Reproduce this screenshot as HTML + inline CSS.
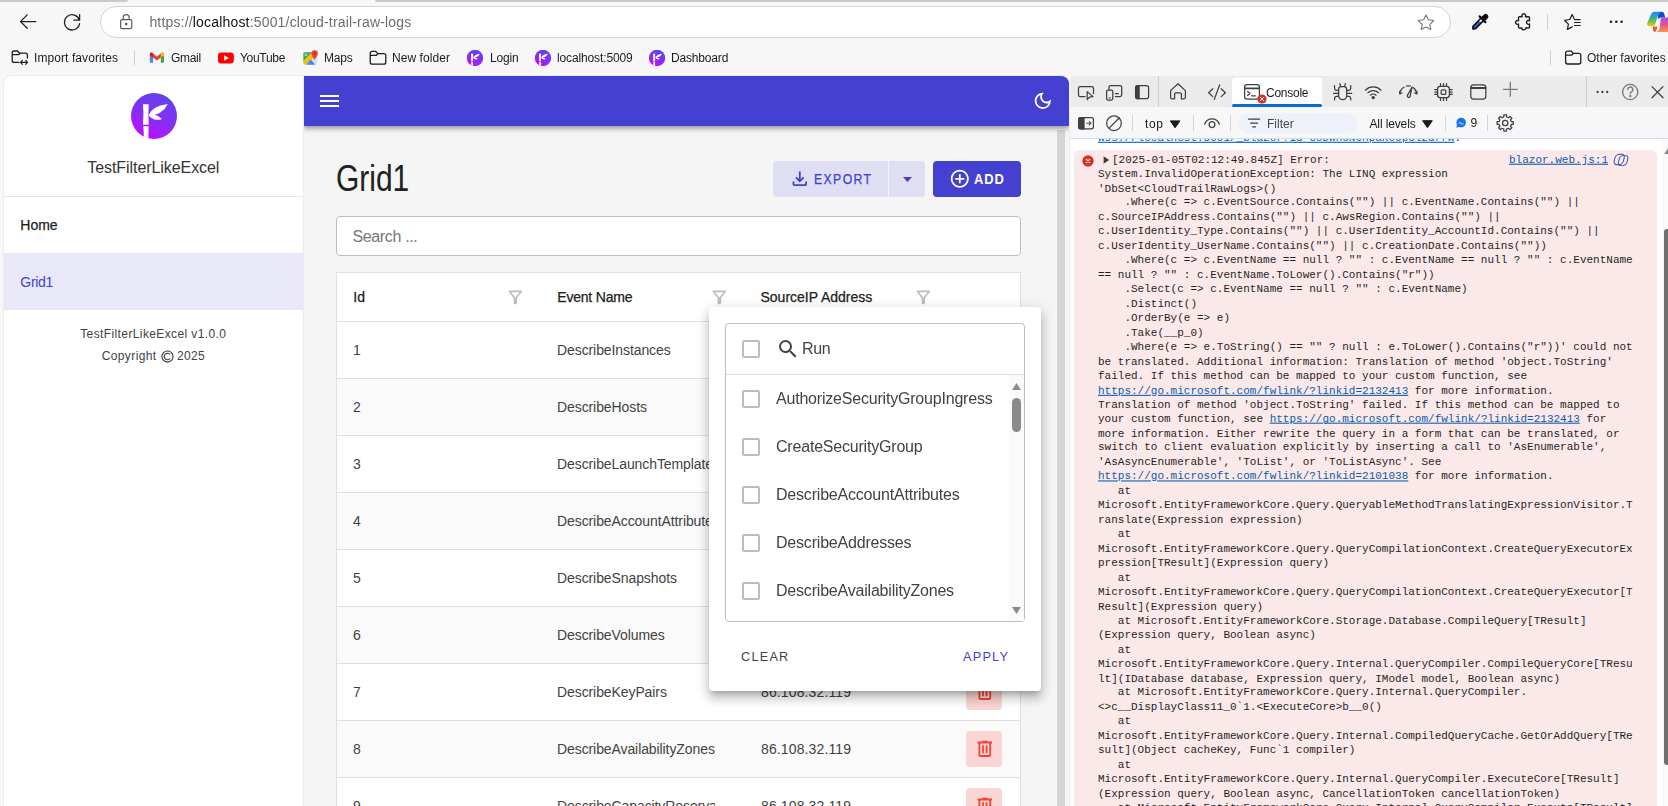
<!DOCTYPE html>
<html>
<head>
<meta charset="utf-8">
<title>Grid1</title>
<style>
*{box-sizing:border-box;margin:0;padding:0}
html,body{width:1668px;height:806px;overflow:hidden;background:#f7f7f7;font-family:"Liberation Sans",sans-serif;}
.abs{position:absolute}
#root{position:absolute;left:0;top:0;width:1668px;height:806px;overflow:hidden;background:#f7f7f7}
.t{position:absolute;white-space:nowrap;line-height:1}
.li,.bm,.gs{will-change:transform}
svg{position:absolute;overflow:visible}
/* ---------- browser chrome ---------- */
#tabstripL{left:0;top:0;width:127.500px;height:1.500px;background:#c9c9c9;border-radius:0 0 3px 0}
#tabstripR{left:375px;top:0;width:1293px;height:1.500px;background:#c9c9c9;border-radius:0 0 0 3px}
#addr{left:100px;top:6px;width:1351px;height:31.500px;background:#fff;border:1px solid #d4d4d4;border-radius:16px}
.bm{font-size:12px;color:#1b1b1b;top:51.600px;z-index:6}
.url{font-size:14px;letter-spacing:0.175px;z-index:6}
/* ---------- app ---------- */
#page{left:4px;top:76px;width:1065px;height:730px;background:#f5f5f5;border-radius:8px 8px 0 0;overflow:hidden;box-shadow:0 0 1.500px rgba(0,0,0,.22)}
#side{left:0;top:0;width:299px;height:730px;background:#fff}
#sideBorder{left:299px;top:0;width:1px;height:730px;background:#ececec}
#hdr2{left:0;top:0;width:765px;height:50px;background:#4340d2;box-shadow:0 2px 4px rgba(0,0,0,.28),0 4px 5px rgba(0,0,0,.12)}

#pg{left:-4px;top:-76px;width:1668px;height:806px}
.rb{font-family:"Liberation Sans",sans-serif}
.med{-webkit-text-stroke:0.25px currentColor}
#sideDiv{left:4px;top:196px;width:299px;height:1px;background:#e8e8e8}
#navsel{left:4px;top:253.400px;width:299px;height:57.100px;background:#e8e8f9}
#h1{left:336px;top:160.500px;font-size:36px;color:#212121;transform-origin:0 0;transform:scaleX(0.832)}
.btn{border-radius:4px;height:36px;top:161px}
#search{left:336px;top:216px;width:685px;height:40px;background:#fff;border:1px solid #bdbdbd;border-radius:4px}
#tbl{left:336px;top:272px;width:685px;height:540px;background:#fff;border:1px solid #e0e0e0}
.row{left:337px;width:683px;height:57px;border-top:1px solid #e0e0e0}
.row.alt{background:#fafafa}
.th{font-size:14px;color:#212121;top:290px}
.td{font-size:14px;color:#424242;letter-spacing:-0.09px}
.del{left:966px;width:36px;height:36px;border-radius:4px;background:#f9d6d3}
#pop{left:709px;top:307px;width:332px;height:384px;background:#fff;border-radius:4px;box-shadow:0 5px 5px -3px rgba(0,0,0,.2),0 8px 10px 1px rgba(0,0,0,.14),0 3px 14px 2px rgba(0,0,0,.12)}
#lb{left:725px;top:323px;width:300px;height:299px;border:1px solid #bdbdbd;border-radius:4px;background:#fff;overflow:hidden}
.cb{left:742px;width:18px;height:18px;border:2px solid #bdbdbd;border-radius:2px;background:#fff}
.li{left:776px;font-size:16px;color:#424242;letter-spacing:-0.2px}
#vscroll{left:1057px;top:130px;width:8px;height:680px;background:#d5d5d5}
/* ---------- devtools ---------- */
#dt{left:1071px;top:76px;width:597px;height:730px;background:#fff;overflow:hidden}
#dtbar1{left:0;top:0;width:597px;height:31px;background:#ebebeb}
#dtbar2{left:0;top:31px;width:597px;height:32px;background:#f7f7f7;border-bottom:1px solid #cbdcf7;z-index:3}
#dtbar1{z-index:3}
#err{left:3px;top:74px;width:583px;height:700px;background:#fbe9e9;border-radius:6px 6px 0 0}
#con{left:27px;top:77.300px;transform:scaleY(1.07);transform-origin:0 0;font-family:"Liberation Mono",monospace;font-size:11px;line-height:13.463px;color:#1f1f1f;white-space:pre;z-index:2}
#con .l1{padding-left:14px}
.dtt{font-size:12px;color:#1b1b1b;z-index:6}
.lk{color:#0a5cae;text-decoration:underline;text-underline-offset:1.200px}
#prevmsg{left:27px;top:54.300px;transform:scaleY(1.07);transform-origin:0 0;font-family:"Liberation Mono",monospace;font-size:11px;line-height:14.386px;color:#1f1f1f;white-space:pre;z-index:1}
#srclink{left:438px;top:77.300px;transform:scaleY(1.07);transform-origin:0 0;font-family:"Liberation Mono",monospace;font-size:11px;line-height:13.463px;white-space:pre;z-index:2}
#dtscroll{left:593px;top:153px;width:4px;height:536px;background:#707070;border-radius:3px 0 0 3px;z-index:2}
#dtscrollbg{left:590.500px;top:63px;width:8px;height:667px;background:#fafafa;z-index:1}
</style>
</head>
<body>
<div id="root">
<!-- CHROME -->
<div class="abs" id="tabstripL"></div>
<div class="abs" id="tabstripR"></div>
<div class="abs" id="addr"></div>
<svg id="chsvg" style="left:0;top:0;z-index:5" width="1668" height="76" viewBox="0 0 1668 76">
  <defs>
    <linearGradient id="lg" x1="0.7" y1="0" x2="0.25" y2="1"><stop offset="0" stop-color="#5d45ec"/><stop offset="0.55" stop-color="#8a2cf6"/><stop offset="1" stop-color="#c80aff"/></linearGradient>
    <clipPath id="lc"><circle cx="30" cy="29.85" r="23"/></clipPath>
    <symbol id="logo" viewBox="7 6.85 46 46">
      <circle cx="30" cy="29.85" r="23" fill="url(#lg)"/>
      <g clip-path="url(#lc)" fill="#fff">
        <path d="M19 18.1 H24.7 Q24.1 28 24.7 38.5 H19 Q19.9 28 19 18.1Z"/>
        <path d="M19.2 40.2 H24.7 Q24.3 47 24.5 54 H19.9 Q20 47 19.2 40.2Z"/>
        <path d="M24.800 29.700 Q27.300 20.200 43.900 17.900 Q38.200 29 24.800 29.700Z"/>
        <path d="M24.800 29.300 Q31.500 26.700 38 32.800 Q30.500 35.700 24.800 29.300Z"/>
      </g>
    </symbol>
    <linearGradient id="cp1" x1="0" y1="0" x2="0" y2="1"><stop offset="0" stop-color="#1c8ef2"/><stop offset="0.4" stop-color="#2aa9b8"/><stop offset="0.6" stop-color="#5dbb55"/><stop offset="1" stop-color="#eccb00"/></linearGradient>
    <linearGradient id="cp2" x1="0" y1="0" x2="0" y2="1"><stop offset="0" stop-color="#a24fe6"/><stop offset="0.5" stop-color="#e8508e"/><stop offset="1" stop-color="#ff9540"/></linearGradient>
    <linearGradient id="cp3" x1="0" y1="0" x2="0" y2="1"><stop offset="0" stop-color="#3bc7b0"/><stop offset="0.5" stop-color="#c7d144"/><stop offset="1" stop-color="#f3a438"/></linearGradient>
  </defs>
  <g fill="none" stroke="#1f1f1f" stroke-width="1.3" stroke-linecap="round" stroke-linejoin="round">
    <!-- back -->
    <path d="M20.6 21.6 H35.8 M27.2 14.9 L20.5 21.6 L27.2 28.3"/>
    <!-- reload -->
    <path d="M79.4 20.2 A7.6 7.6 0 1 0 79.6 23.6 M79.6 14.6 V20.2 H74"/>
    <!-- import favorites icon -->
    <path d="M19 62.4 H14.2 a2 2 0 0 1 -2 -2 V53 a2 2 0 0 1 2 -2 h3.4 l2 2.2 H25.4 a2 2 0 0 1 2 2 V58 M12.2 54.6 h6.6 l1.8 -1.4"/>
    <path d="M20.4 62.4 H27.6 M22.4 60.4 l-2 2 l2 2 M25.6 60.4 l2 2 l-2 2" stroke-width="1.1"/>
    <!-- new folder icon -->
    <path d="M370.2 62.2 V53.4 a2 2 0 0 1 2 -2 h3.6 l2 2.2 H383.8 a2 2 0 0 1 2 2 V62.2 a2 2 0 0 1 -2 2 H372.2 a2 2 0 0 1 -2 -2 Z M370.2 55.4 h6 l1.8 -1.6"/>
    <!-- other favorites folder -->
    <path d="M1565.6 62 V53.2 a2 2 0 0 1 2 -2 h3.6 l2 2.2 H1578.8 a2 2 0 0 1 2 2 V62 a2 2 0 0 1 -2 2 H1567.6 a2 2 0 0 1 -2 -2 Z M1565.6 55.2 h6 l1.8 -1.6"/>
    <!-- puzzle -->
    <path d="M1519.500 16.800 H1522.200 a1.900 1.900 0 1 1 3.200 0 H1528.500 a1 1 0 0 1 1 1 V20.800 a1.900 1.900 0 1 0 0 3.200 V27 a1 1 0 0 1 -1 1 H1525.700 a1.900 1.900 0 0 1 -3.800 0 H1519.500 a1 1 0 0 1 -1 -1 V24 a1.900 1.900 0 1 1 0 -3.200 V17.800 a1 1 0 0 1 1 -1 Z" stroke-width="1.400"/>
    <!-- favorites star + lines -->
    <path d="M1574 18.600 L1572.100 14.600 L1569.800 19.500 L1564.500 20.300 L1568.400 24.100 L1567.400 29.400 L1572.200 26.900" stroke-width="1.250"/>
    <path d="M1574.500 19.600 H1580.200 M1574.500 22.500 H1580.200 M1574.500 25.500 H1580.200" stroke-width="1.200"/>
  </g>
  <!-- lock -->
  <g fill="none" stroke="#5a5a5a" stroke-width="1.2" stroke-linejoin="round">
    <rect x="120.6" y="19.6" width="11.2" height="9" rx="1.6"/>
    <path d="M123.2 19.6 V17.6 a3 3 0 0 1 6 0 V19.6"/>
    <circle cx="126.2" cy="24.1" r="0.7" fill="#5a5a5a"/>
  </g>
  <!-- star -->
  <path d="M1426 14.9 L1428.4 19.8 L1433.8 20.5 L1429.8 24.3 L1430.8 29.6 L1426 27 L1421.2 29.6 L1422.2 24.3 L1418.2 20.5 L1423.6 19.8 Z" fill="none" stroke="#7a7a7a" stroke-width="1.15" stroke-linejoin="round"/>
  <!-- separators -->
  <path d="M134.5 50.6 V65.6 M1547.5 14 V29.8 M1550.5 50 V65.6" stroke="#d0d0d0" stroke-width="1"/>
  <!-- eyedropper -->
  <g>
    <path d="M1472.900 28.900 L1473 26.200 L1481.400 17.800 L1483.900 20.300 L1475.500 28.700 Z" fill="#3a55d8" stroke="#0a0a0a" stroke-width="1.600" stroke-linejoin="round"/>
    <path d="M1478.800 21.600 L1481.400 19 L1482.700 20.300 L1481.200 21.800 Z" fill="#fff"/>
    <path d="M1479.600 16.400 L1485.400 22.200" stroke="#0a0a0a" stroke-width="2.200" stroke-linecap="round"/>
    <path d="M1481.800 17.400 L1484.400 14.800 a1.500 1.500 0 0 1 2.100 0 l0.900 0.900 a1.500 1.500 0 0 1 0 2.100 L1484.800 20.400 Z" fill="#0a0a0a" stroke="#0a0a0a" stroke-width="1.200" stroke-linejoin="round"/>
  </g>
  <!-- ... -->
  <g fill="#1f1f1f"><circle cx="1611" cy="21.8" r="1.3"/><circle cx="1616.3" cy="21.8" r="1.3"/><circle cx="1621.6" cy="21.8" r="1.3"/></g>
  <!-- copilot -->
  <g>
    <path d="M1657.600 15.600 Q1658.800 11.700 1661.600 11.700 Q1663.700 11.700 1664.300 14 L1665.200 17.600 H1661 Q1659 17.600 1658.400 19.200 Z" fill="#1747d4"/>
    <path d="M1651.400 13.600 Q1652.500 11.700 1654.600 11.700 H1661.600 Q1658.800 12.400 1657.700 16 L1655.300 24 Q1654.600 26.200 1652.600 26.200 H1649.200 Q1646.600 25.800 1647.200 23 Z" fill="url(#cp1)"/>
    <path d="M1661 17.600 H1668 V31.900 H1656.400 Q1658.800 31.500 1659.600 28.800 Z" fill="url(#cp2)"/>
    <path d="M1652.900 26.600 H1657.500 L1656.300 30.400 Q1655.700 31.900 1654.500 31.900 Q1653.200 31.400 1653 29.600 Z" fill="#ee5a30"/>
  </g>
  <!-- gmail -->
  <g>
    <path d="M149.8 55.2 V61.8 a1 1 0 0 0 1 1 H153 V56.6 Z" fill="#4285f4"/>
    <path d="M164 55.2 V61.8 a1 1 0 0 1 -1 1 H160.800 V56.6 Z" fill="#34a853"/>
    <path d="M149.800 55.2 V54.200 a1.600 1.600 0 0 1 2.600 -1.300 L156.900 56.400 L161.400 52.900 a1.600 1.600 0 0 1 2.600 1.300 V55.2 L156.900 60.600 Z" fill="#ea4335"/>
    <path d="M160.8 53.400 L161.400 52.900 a1.600 1.600 0 0 1 2.600 1.300 V55.200 L160.800 57.600 Z" fill="#fbbc04"/>
    <path d="M153 53.400 L152.400 52.900 a1.600 1.600 0 0 0 -2.600 1.300 V55.200 L153 57.600 Z" fill="#c5221f"/>
  </g>
  <!-- youtube -->
  <rect x="218" y="52.500" width="15.800" height="10.900" rx="3" fill="#ff0000"/>
  <path d="M224.100 55.200 V60.700 L228.800 57.950 Z" fill="#fff"/>
  <!-- maps -->
  <g>
    <path d="M303.400 53.600 a1.400 1.400 0 0 1 1.400 -1.400 H312 L303.400 61.500 Z" fill="#34a853"/>
    <path d="M312 52.200 h1.500 L316 57 L305 64.800 h-0.200 a1.400 1.400 0 0 1 -1.400 -1.400 V61.500 Z" fill="#fbbc04"/>
    <path d="M306 64.800 L310.800 59.600 L315.600 64.800 Z" fill="#4285f4"/>
    <path d="M311.500 59 L316.600 55 V63.400 a1.400 1.400 0 0 1 -1.200 1.400 Z" fill="#dadce0"/>
    <circle cx="305.900" cy="54.800" r="1.100" fill="none" stroke="#fff" stroke-width="0.600"/>
    <path d="M314.600 50.300 a3.300 3.300 0 0 1 3.300 3.300 q0 2 -3.300 6.200 q-3.300 -4.200 -3.300 -6.200 a3.300 3.300 0 0 1 3.300 -3.300 Z" fill="#ea4335"/>
    <circle cx="314.600" cy="53.500" r="1.100" fill="#a52714"/>
  </g>
  <use href="#logo" x="466.700" y="49.750" width="16.500" height="16.500"/>
  <use href="#logo" x="534.700" y="49.750" width="16.500" height="16.500"/>
  <use href="#logo" x="648.800" y="49.750" width="16.500" height="16.500"/>
</svg>
<div class="t url" style="left:149.400px;top:15.100px"><span style="color:#6d6d6d">https://</span><span style="color:#111">localhost</span><span style="color:#6d6d6d">:5001/cloud-trail-raw-logs</span></div>
<div class="t bm" style="left:34px;letter-spacing:0.08px">Import favorites</div>
<div class="t bm" style="left:171px;letter-spacing:-0.3px">Gmail</div>
<div class="t bm" style="left:240.400px;letter-spacing:-0.3px">YouTube</div>
<div class="t bm" style="left:324.200px;letter-spacing:-0.18px">Maps</div>
<div class="t bm" style="left:392.400px;letter-spacing:0.06px">New folder</div>
<div class="t bm" style="left:489.500px;letter-spacing:-0.15px">Login</div>
<div class="t bm" style="left:557px;letter-spacing:-0.13px">localhost:5009</div>
<div class="t bm" style="left:671.200px;letter-spacing:-0.17px">Dashboard</div>
<div class="t bm" style="left:1587.200px">Other favorites</div>
<!-- BOOKMARKS -->

<!-- APP -->
<div class="abs" id="page">
  <div class="abs" id="side"></div>
  <div class="abs" id="sideBorder"></div>
  <div class="abs" id="pg">
  <!-- sidebar -->
  <svg style="left:131px;top:93px" width="46" height="46" viewBox="0 0 46 46"><use href="#logo" x="0" y="0" width="46" height="46"/></svg>
  <div class="t" style="left:87.300px;top:159.500px;font-size:16px;color:#333;letter-spacing:-0.07px">TestFilterLikeExcel</div>
  <div class="abs" id="sideDiv"></div>
  <div class="t med" style="left:20.300px;top:218px;font-size:14px;color:#212121">Home</div>
  <div class="abs" id="navsel"></div>
  <div class="t" style="left:20.300px;top:275px;font-size:14px;color:#4340d2;letter-spacing:-0.29px">Grid1</div>
  <div class="t" style="left:80.200px;top:328px;font-size:12px;color:#424242;letter-spacing:0.39px">TestFilterLikeExcel v1.0.0</div>
  <div class="t" style="left:101.700px;top:350px;font-size:12px;color:#424242;letter-spacing:0.39px">Copyright</div>
  <svg style="left:161px;top:349.500px" width="13" height="13" viewBox="0 0 13 13"><circle cx="6.500" cy="6.500" r="5.600" fill="none" stroke="#333" stroke-width="1.050"/><path d="M9.100 4.500 A3.300 3.300 0 1 0 9.100 8.500" fill="none" stroke="#333" stroke-width="1.100"/></svg>
  <div class="t" style="left:176.900px;top:350px;font-size:12px;color:#424242;letter-spacing:0.39px">2025</div>
  <!-- title + buttons -->
  <div class="t" id="h1">Grid1</div>
  <div class="abs btn" style="left:773px;width:115px;background:#dfdff3;border-radius:4px 0 0 4px"></div>
  <div class="abs btn" style="left:889px;width:36px;background:#dfdff3;border-radius:0 4px 4px 0"></div>
  <svg style="left:788.700px;top:167.900px" width="21.600" height="21.600" viewBox="0 0 24 24"><path fill="#4340d2" d="M18 15v3H6v-3H4v3c0 1.100.9 2 2 2h12c1.100 0 2-.9 2-2v-3h-2zm-1-4l-1.410-1.410L13 12.170V4h-2v8.170L8.410 9.590 7 11l5 5 5-5z"/></svg>
  <div class="t med" style="left:814px;top:171.700px;font-size:14.600px;color:#4340d2;letter-spacing:1.64px;transform-origin:0 50%;transform:scaleX(0.84)">EXPORT</div>
  <svg style="left:903px;top:177px" width="9" height="5" viewBox="0 0 9 5"><path d="M0 0 H9 L4.500 5 Z" fill="#4340d2"/></svg>
  <div class="abs btn" style="left:933px;width:88px;background:#4340d2"></div>
  <svg style="left:948.600px;top:168.200px" width="21.600" height="21.600" viewBox="0 0 24 24"><path fill="#fff" d="M13 7h-2v4H7v2h4v4h2v-4h4v-2h-4V7zm-1-5C6.480 2 2 6.480 2 12s4.480 10 10 10 10-4.480 10-10S17.520 2 12 2zm0 18c-4.410 0-8-3.590-8-8s3.590-8 8-8 8 3.590 8 8-3.590 8-8 8z"/></svg>
  <div class="t" style="left:973.500px;top:171.700px;font-size:14.600px;font-weight:700;color:#fff;letter-spacing:1px;transform-origin:0 50%;transform:scaleX(0.884)">ADD</div>
  <!-- search -->
  <div class="abs" id="search"></div>
  <div class="t" style="left:352.400px;top:229px;font-size:16px;color:#757575;letter-spacing:-0.34px">Search ...</div>
  <!-- table -->
  <div class="abs" id="tbl"></div>
  <div class="t th med" style="left:353.300px">Id</div>
  <svg style="left:504.6px;top:286.600px" width="20.600" height="20.600" viewBox="0 0 24 24"><path fill="#bdbdbd" d="M7 6h10l-5.010 6.300L7 6zm-2.750-.39C6.270 8.200 10 13 10 13v6c0 .55.45 1 1 1h2c.55 0 1-.45 1-1v-6s3.720-4.800 5.740-7.390A.998.998 0 0 0 18.950 4H5.040c-.83 0-1.300.95-.79 1.610z"/></svg>
  <div class="t th med" style="left:557.300px;letter-spacing:-0.21px">Event Name</div>
  <svg style="left:708.6px;top:286.600px" width="20.600" height="20.600" viewBox="0 0 24 24"><path fill="#bdbdbd" d="M7 6h10l-5.010 6.300L7 6zm-2.750-.39C6.270 8.200 10 13 10 13v6c0 .55.45 1 1 1h2c.55 0 1-.45 1-1v-6s3.720-4.800 5.740-7.390A.998.998 0 0 0 18.950 4H5.040c-.83 0-1.300.95-.79 1.610z"/></svg>
  <div class="t th med" style="left:760.500px">SourceIP Address</div>
  <svg style="left:912.6px;top:286.600px" width="20.600" height="20.600" viewBox="0 0 24 24"><path fill="#bdbdbd" d="M7 6h10l-5.010 6.300L7 6zm-2.750-.39C6.270 8.200 10 13 10 13v6c0 .55.45 1 1 1h2c.55 0 1-.45 1-1v-6s3.720-4.800 5.740-7.390A.998.998 0 0 0 18.950 4H5.040c-.83 0-1.300.95-.79 1.610z"/></svg>
  <div class="abs row" style="top:321px"></div>
  <div class="t td" style="left:353px;top:343.3px">1</div>
  <div class="t td" style="left:557px;top:343.3px">DescribeInstances</div>
  <div class="t td" style="left:761px;top:343.3px;letter-spacing:0.13px">86.108.32.119</div>
  <div class="abs del" style="top:332px"></div>
  <svg style="left:973.500px;top:339.2px" width="21.600" height="21.600" viewBox="0 0 24 24"><path fill="#f44336" d="M7 21q-.825 0-1.412-.587T5 19V6H4V4h5V3h6v1h5v2h-1v13q0 .825-.587 1.413T17 21zM17 6H7v13h10zM9 17h2V8H9zm4 0h2V8h-2z"/></svg>
  <div class="abs row alt" style="top:378px"></div>
  <div class="t td" style="left:353px;top:400.3px">2</div>
  <div class="t td" style="left:557px;top:400.3px">DescribeHosts</div>
  <div class="t td" style="left:761px;top:400.3px;letter-spacing:0.13px">86.108.32.119</div>
  <div class="abs del" style="top:389px"></div>
  <svg style="left:973.500px;top:396.2px" width="21.600" height="21.600" viewBox="0 0 24 24"><path fill="#f44336" d="M7 21q-.825 0-1.412-.587T5 19V6H4V4h5V3h6v1h5v2h-1v13q0 .825-.587 1.413T17 21zM17 6H7v13h10zM9 17h2V8H9zm4 0h2V8h-2z"/></svg>
  <div class="abs row" style="top:435px"></div>
  <div class="t td" style="left:353px;top:457.3px">3</div>
  <div class="t td" style="left:557px;top:457.3px">DescribeLaunchTemplates</div>
  <div class="t td" style="left:761px;top:457.3px;letter-spacing:0.13px">86.108.32.119</div>
  <div class="abs del" style="top:446px"></div>
  <svg style="left:973.500px;top:453.2px" width="21.600" height="21.600" viewBox="0 0 24 24"><path fill="#f44336" d="M7 21q-.825 0-1.412-.587T5 19V6H4V4h5V3h6v1h5v2h-1v13q0 .825-.587 1.413T17 21zM17 6H7v13h10zM9 17h2V8H9zm4 0h2V8h-2z"/></svg>
  <div class="abs row alt" style="top:492px"></div>
  <div class="t td" style="left:353px;top:514.3px">4</div>
  <div class="t td" style="left:557px;top:514.3px">DescribeAccountAttributes</div>
  <div class="t td" style="left:761px;top:514.3px;letter-spacing:0.13px">86.108.32.119</div>
  <div class="abs del" style="top:503px"></div>
  <svg style="left:973.500px;top:510.2px" width="21.600" height="21.600" viewBox="0 0 24 24"><path fill="#f44336" d="M7 21q-.825 0-1.412-.587T5 19V6H4V4h5V3h6v1h5v2h-1v13q0 .825-.587 1.413T17 21zM17 6H7v13h10zM9 17h2V8H9zm4 0h2V8h-2z"/></svg>
  <div class="abs row" style="top:549px"></div>
  <div class="t td" style="left:353px;top:571.3px">5</div>
  <div class="t td" style="left:557px;top:571.3px">DescribeSnapshots</div>
  <div class="t td" style="left:761px;top:571.3px;letter-spacing:0.13px">86.108.32.119</div>
  <div class="abs del" style="top:560px"></div>
  <svg style="left:973.500px;top:567.2px" width="21.600" height="21.600" viewBox="0 0 24 24"><path fill="#f44336" d="M7 21q-.825 0-1.412-.587T5 19V6H4V4h5V3h6v1h5v2h-1v13q0 .825-.587 1.413T17 21zM17 6H7v13h10zM9 17h2V8H9zm4 0h2V8h-2z"/></svg>
  <div class="abs row alt" style="top:606px"></div>
  <div class="t td" style="left:353px;top:628.3px">6</div>
  <div class="t td" style="left:557px;top:628.3px">DescribeVolumes</div>
  <div class="t td" style="left:761px;top:628.3px;letter-spacing:0.13px">86.108.32.119</div>
  <div class="abs del" style="top:617px"></div>
  <svg style="left:973.500px;top:624.2px" width="21.600" height="21.600" viewBox="0 0 24 24"><path fill="#f44336" d="M7 21q-.825 0-1.412-.587T5 19V6H4V4h5V3h6v1h5v2h-1v13q0 .825-.587 1.413T17 21zM17 6H7v13h10zM9 17h2V8H9zm4 0h2V8h-2z"/></svg>
  <div class="abs row" style="top:663px"></div>
  <div class="t td" style="left:353px;top:685.3px">7</div>
  <div class="t td" style="left:557px;top:685.3px">DescribeKeyPairs</div>
  <div class="t td" style="left:761px;top:685.3px;letter-spacing:0.13px">86.108.32.119</div>
  <div class="abs del" style="top:674px"></div>
  <svg style="left:973.500px;top:681.2px" width="21.600" height="21.600" viewBox="0 0 24 24"><path fill="#f44336" d="M7 21q-.825 0-1.412-.587T5 19V6H4V4h5V3h6v1h5v2h-1v13q0 .825-.587 1.413T17 21zM17 6H7v13h10zM9 17h2V8H9zm4 0h2V8h-2z"/></svg>
  <div class="abs row alt" style="top:720px"></div>
  <div class="t td" style="left:353px;top:742.3px">8</div>
  <div class="t td" style="left:557px;top:742.3px">DescribeAvailabilityZones</div>
  <div class="t td" style="left:761px;top:742.3px;letter-spacing:0.13px">86.108.32.119</div>
  <div class="abs del" style="top:731px"></div>
  <svg style="left:973.500px;top:738.2px" width="21.600" height="21.600" viewBox="0 0 24 24"><path fill="#f44336" d="M7 21q-.825 0-1.412-.587T5 19V6H4V4h5V3h6v1h5v2h-1v13q0 .825-.587 1.413T17 21zM17 6H7v13h10zM9 17h2V8H9zm4 0h2V8h-2z"/></svg>
  <div class="abs row" style="top:777px"></div>
  <div class="t td" style="left:353px;top:799.3px">9</div>
  <div class="t td" style="left:557px;top:799.3px;width:157.500px;overflow:hidden">DescribeCapacityReservations</div>
  <div class="t td" style="left:761px;top:799.3px;letter-spacing:0.13px">86.108.32.119</div>
  <div class="abs del" style="top:788px"></div>
  <svg style="left:973.500px;top:795.2px" width="21.600" height="21.600" viewBox="0 0 24 24"><path fill="#f44336" d="M7 21q-.825 0-1.412-.587T5 19V6H4V4h5V3h6v1h5v2h-1v13q0 .825-.587 1.413T17 21zM17 6H7v13h10zM9 17h2V8H9zm4 0h2V8h-2z"/></svg>
  <!-- page scrollbar -->
  <div class="abs" id="vscroll"></div>
  <!-- header -->
  <div class="abs" style="left:304px;top:76px;width:765px;height:70px;overflow:hidden"><div class="abs" id="hdr2"></div></div>
  <svg style="left:319.700px;top:95px" width="20" height="12" viewBox="0 0 20 12"><path d="M0 1 H19 M0 6 H19 M0 11 H19" stroke="#fff" stroke-width="2"/></svg>
  <svg style="left:1032.300px;top:90.300px" width="21.600" height="21.600" viewBox="0 0 24 24"><path fill="#fff" d="M9.37 5.51A7.350 7.350 0 0 0 9.100 7.500c0 4.080 3.320 7.400 7.400 7.400.68 0 1.350-.09 1.990-.27A7.014 7.014 0 0 1 12 19c-3.860 0-7-3.140-7-7 0-2.930 1.810-5.450 4.370-6.490zM12 3a9 9 0 1 0 9 9c0-.46-.04-.92-.1-1.360a5.389 5.389 0 0 1-4.400 2.260 5.403 5.403 0 0 1-3.140-9.800c-.44-.06-.9-.1-1.360-.1z"/></svg>
  <!-- popup -->
  <div class="abs" id="pop"></div>
  <div class="abs" id="lb"></div>
  <div class="abs" style="left:726px;top:374px;width:298px;height:1px;background:#e0e0e0"></div>
  <div class="abs" style="left:1009px;top:375px;width:15px;height:246px;background:#fafafa"></div>
  <div class="abs cb" style="top:340px"></div>
  <svg style="left:775.600px;top:337.200px" width="24" height="24" viewBox="0 0 24 24"><path fill="#424242" d="M15.500 14h-.79l-.28-.27A6.471 6.471 0 0 0 16 9.500 6.500 6.500 0 1 0 9.500 16c1.610 0 3.090-.59 4.230-1.570l.27.28v.79l5 4.990L20.490 19l-4.990-5zm-6 0C7.010 14 5 11.990 5 9.500S7.010 5 9.500 5 14 7.010 14 9.500 11.990 14 9.500 14z"/></svg>
  <div class="t gs" style="left:802px;top:340.500px;font-size:16px;color:#424242;letter-spacing:-0.35px">Run</div>
  <div class="abs cb" style="top:389.7px"></div>
  <div class="t li" style="top:391.3px">AuthorizeSecurityGroupIngress</div>
  <div class="abs cb" style="top:437.7px"></div>
  <div class="t li" style="top:439.3px">CreateSecurityGroup</div>
  <div class="abs cb" style="top:485.7px"></div>
  <div class="t li" style="top:487.3px">DescribeAccountAttributes</div>
  <div class="abs cb" style="top:533.7px"></div>
  <div class="t li" style="top:535.3px">DescribeAddresses</div>
  <div class="abs cb" style="top:581.7px"></div>
  <div class="t li" style="top:583.3px">DescribeAvailabilityZones</div>
  <svg style="left:1012px;top:383px" width="9" height="7" viewBox="0 0 9 7"><path d="M0 7 L4.500 0 L9 7 Z" fill="#8a8a8a"/></svg>
  <div class="abs" style="left:1012px;top:398px;width:9px;height:34px;border-radius:4.500px;background:#8a8a8a"></div>
  <svg style="left:1012px;top:607px" width="9" height="7" viewBox="0 0 9 7"><path d="M0 0 L4.500 7 L9 0 Z" fill="#8a8a8a"/></svg>
  <div class="t" style="left:741px;top:650.200px;font-size:13.650px;color:#424242;letter-spacing:1.34px;transform-origin:0 50%;transform:scaleX(0.93)">CLEAR</div>
  <div class="t" style="left:962.800px;top:650.200px;font-size:13.650px;color:#4340d2;letter-spacing:1.34px;transform-origin:0 50%;transform:scaleX(0.93)">APPLY</div>
</div>
</div>

<!-- DEVTOOLS -->
<div class="abs" id="dt">
  <div class="abs" id="dtbar1"></div>
  <div class="abs" id="dtbar2"></div>
  <!-- DT-ICONS -->
  <!-- CONSOLE -->
  <div class="abs" id="prevmsg"><u class="lk">wss://localhost:5001/_blazor?id=GoDWnoNchpaRcOp5l2arrw</u>.</div>
    <div class="abs" id="err"></div>
  <pre class="abs" id="con"><span class="l1">[2025-01-05T02:12:49.845Z] Error: </span>
System.InvalidOperationException: The LINQ expression
'DbSet&lt;CloudTrailRawLogs&gt;()
    .Where(c =&gt; c.EventSource.Contains("") || c.EventName.Contains("") ||
c.SourceIPAddress.Contains("") || c.AwsRegion.Contains("") ||
c.UserIdentity_Type.Contains("") || c.UserIdentity_AccountId.Contains("") ||
c.UserIdentity_UserName.Contains("") || c.CreationDate.Contains(""))
    .Where(c =&gt; c.EventName == null ? "" : c.EventName == null ? "" : c.EventName
== null ? "" : c.EventName.ToLower().Contains("r"))
    .Select(c =&gt; c.EventName == null ? "" : c.EventName)
    .Distinct()
    .OrderBy(e =&gt; e)
    .Take(__p_0)
    .Where(e =&gt; e.ToString() == "" ? null : e.ToLower().Contains("r"))' could not
be translated. Additional information: Translation of method 'object.ToString'
failed. If this method can be mapped to your custom function, see
<u class="lk">https://go.microsoft.com/fwlink/?linkid=2132413</u> for more information.
Translation of method 'object.ToString' failed. If this method can be mapped to
your custom function, see <u class="lk">https://go.microsoft.com/fwlink/?linkid=2132413</u> for
more information. Either rewrite the query in a form that can be translated, or
switch to client evaluation explicitly by inserting a call to 'AsEnumerable',
'AsAsyncEnumerable', 'ToList', or 'ToListAsync'. See
<u class="lk">https://go.microsoft.com/fwlink/?linkid=2101038</u> for more information.
   at
Microsoft.EntityFrameworkCore.Query.QueryableMethodTranslatingExpressionVisitor.T
ranslate(Expression expression)
   at
Microsoft.EntityFrameworkCore.Query.QueryCompilationContext.CreateQueryExecutorEx
pression[TResult](Expression query)
   at
Microsoft.EntityFrameworkCore.Query.QueryCompilationContext.CreateQueryExecutor[T
Result](Expression query)
   at Microsoft.EntityFrameworkCore.Storage.Database.CompileQuery[TResult]
(Expression query, Boolean async)
   at
Microsoft.EntityFrameworkCore.Query.Internal.QueryCompiler.CompileQueryCore[TResu
lt](IDatabase database, Expression query, IModel model, Boolean async)
   at Microsoft.EntityFrameworkCore.Query.Internal.QueryCompiler.
&lt;&gt;c__DisplayClass11_0`1.&lt;ExecuteCore&gt;b__0()
   at
Microsoft.EntityFrameworkCore.Query.Internal.CompiledQueryCache.GetOrAddQuery[TRe
sult](Object cacheKey, Func`1 compiler)
   at
Microsoft.EntityFrameworkCore.Query.Internal.QueryCompiler.ExecuteCore[TResult]
(Expression query, Boolean async, CancellationToken cancellationToken)
   at Microsoft.EntityFrameworkCore.Query.Internal.QueryCompiler.Execute[TResult]
(Expression query, Boolean async)</pre>
  <div class="abs" id="srclink"><u class="lk">blazor.web.js:1</u></div>
  <div class="abs" id="dtscrollbg"></div>
  <div class="abs" id="dtscroll"></div>
  <svg style="left:589px;top:69.600px;z-index:3" width="8" height="8" viewBox="0 0 8 8"><path d="M4.200 8 L8.600 1 L13 8 Z" fill="#8a8a8a"/></svg>
  <svg style="left:11px;top:78.5px;z-index:2" width="12" height="12" viewBox="0 0 12 12"><circle cx="6" cy="6" r="5.7" fill="#d93025"/><path d="M4.300 4.300 L7.700 7.700 M7.700 4.300 L4.300 7.700" stroke="#fff" stroke-width="1.050" stroke-linecap="round"/></svg>
  <svg style="left:32px;top:80px;z-index:2" width="7" height="8" viewBox="0 0 7 8"><path d="M0.6 0.2 L6.2 4 L0.6 7.8 Z" fill="#3c3c3c"/></svg>
  <!-- /CONSOLE -->
</div>
<!-- DT-OVERLAY -->
<svg id="dtsvg" style="left:0;top:0;z-index:5" width="1668" height="806" viewBox="0 0 1668 806">
  <rect x="1232" y="77.500" width="90" height="29.500" rx="3" fill="#fff"/>
  <rect x="1232" y="104" width="90" height="3" rx="1.5" fill="#0b6bd3"/>
  <path d="M1158.5 76 V107 M1586.5 76 V107" stroke="#cdcdcd" stroke-width="1"/>
  <path d="M1132.5 115 V131 M1193.5 115 V131 M1230.5 115 V131 M1445.5 115 V131 M1487.5 115 V131" stroke="#c9d5ea" stroke-width="1"/>
  <rect x="1238" y="113.4" width="120" height="19.6" rx="9.8" fill="#edf2fa"/>
  <g fill="none" stroke="#3f3f3f" stroke-width="1.25" stroke-linecap="round" stroke-linejoin="round">
    <!-- inspect -->
    <path d="M1085 96.6 H1080.2 a1.7 1.7 0 0 1 -1.7 -1.7 V88.2 a1.7 1.7 0 0 1 1.7 -1.7 H1091.8 a1.7 1.7 0 0 1 1.7 1.7 V93.5"/>
    <path d="M1087.2 91.6 V99.6 L1089.5 97.2 L1093 96.6 Z"/>
    <!-- device -->
    <rect x="1106.6" y="90" width="6.2" height="10" rx="1.4"/>
    <path d="M1109.2 97.8 h1"/>
    <path d="M1109 89.6 V87.2 a1.7 1.7 0 0 1 1.7 -1.7 H1120 a1.7 1.7 0 0 1 1.7 1.7 V94.8 a1.7 1.7 0 0 1 -1.7 1.7 H1115.4"/>
    <path d="M1115.4 93.6 h3"/>
    <!-- dock -->
    <rect x="1135.6" y="85.6" width="13" height="13" rx="2.2"/>
    <path d="M1135.600 87.800 a2.200 2.200 0 0 1 2.200 -2.200 h1.300 v13 h-1.300 a2.200 2.200 0 0 1 -2.200 -2.200z" fill="#3f3f3f"/>
    <!-- home -->
    <path d="M1170.6 90.6 L1178 83.8 L1185.4 90.6 V97.2 a1.6 1.6 0 0 1 -1.6 1.6 H1181.4 V94 a1.2 1.2 0 0 0 -1.2 -1.2 h-4.4 a1.2 1.2 0 0 0 -1.2 1.2 V98.8 H1172.2 a1.6 1.6 0 0 1 -1.6 -1.6 Z"/>
    <!-- code -->
    <path d="M1212.8 88.8 L1208.6 92.7 L1212.8 96.6 M1221.2 88.8 L1225.4 92.7 L1221.2 96.6 M1219.700 84.800 L1214.300 99.400"/>
    <!-- console icon -->
    <rect x="1244.6" y="84.6" width="14.8" height="14.4" rx="2.6"/>
    <path d="M1244.6 88.4 H1259.4" stroke-width="1.6"/>
    <path d="M1247.6 91.6 L1250 93.6 L1247.6 95.6 M1251.6 95.8 h3.8"/>
    <!-- bug -->
    <path d="M1338.600 89.400 a2.800 2.800 0 0 1 2.800 -2.800 h2.500 a2.800 2.800 0 0 1 2.800 2.800 V95.600 a4.050 4.050 0 0 1 -8.100 0 Z"/>
    <path d="M1340.600 86.400 L1339.900 83.700 M1344.700 86.400 L1345.400 83.700"/>
    <path d="M1338.600 90.400 h-2 q-1.800 0 -1.900 -1.800 l-0.200 -3 M1338.600 93.400 h-5 M1338.600 96.300 h-2 q-1.800 0 -1.900 1.600 l-0.200 2 M1346.700 90.400 h2 q1.800 0 1.900 -1.800 l0.200 -3 M1346.700 93.400 h5 M1346.700 96.300 h2 q1.800 0 1.900 1.600 l0.200 2"/>
    <!-- wifi -->
    <path d="M1365.4 90.2 A11 11 0 0 1 1381 90.2 M1367.9 92.7 A7.5 7.5 0 0 1 1378.5 92.7 M1370.4 95.2 A4 4 0 0 1 1376 95.2"/>
    <circle cx="1373.2" cy="97.6" r="1.1" fill="#3f3f3f"/>
    <!-- gauge -->
    <path d="M1399.8 93.6 A8.6 8.6 0 0 1 1404 87.2 M1406.4 86 A8.6 8.6 0 0 1 1410.4 86 M1413 87.4 A8.6 8.6 0 0 1 1416.8 93.6"/>
    <path d="M1399.6 91.4 l0.2 2.4 l2.2 -0.8 M1417 91.4 l-0.2 2.4 l-2.2 -0.8"/>
    <path d="M1412 87.2 L1407.4 95.4 a1.5 1.5 0 0 0 2.6 1.4 Z"/>
    <!-- cpu -->
    <rect x="1437.6" y="86.4" width="11.8" height="11.2" rx="2.6"/>
    <rect x="1441.2" y="89.8" width="4.6" height="4.6" rx="1"/>
    <path d="M1440.5 83.6 v2.6 M1443.5 83.6 v2.6 M1446.5 83.6 v2.6 M1440.5 97.8 v2.6 M1443.5 97.8 v2.6 M1446.5 97.8 v2.6 M1434.8 89.6 h2.6 M1434.8 92 h2.6 M1434.8 94.4 h2.6 M1449.6 89.6 h2.6 M1449.6 92 h2.6 M1449.6 94.4 h2.6"/>
    <!-- app window -->
    <rect x="1470.8" y="84.8" width="15" height="14.2" rx="2.8"/>
    <path d="M1471 88 H1485.6" stroke-width="1.8"/>
    <!-- close -->
    <path d="M1652 86.6 L1663 97.8 M1663 86.6 L1652 97.8"/>
    <!-- sidebar toggle -->
    <rect x="1078.6" y="117.6" width="14.8" height="11.2" rx="2"/>
    <path d="M1078.6 119.6 a2 2 0 0 1 2 -2 h3.4 v11.2 h-3.4 a2 2 0 0 1 -2 -2z" fill="#3f3f3f"/>
    <path d="M1086.600 123.200 h4.200 M1089.200 121.400 l1.800 1.800 l-1.800 1.800" stroke="#5a5a5a" stroke-width="1.100"/>
    <!-- clear -->
    <circle cx="1114" cy="123.2" r="7.3"/>
    <path d="M1108.9 128.4 L1119.1 118"/>
    <!-- eye -->
    <path d="M1204.6 124.2 Q1206.6 118.8 1212 118.8 Q1217.4 118.8 1219.4 124.2"/>
    <circle cx="1212" cy="124.6" r="2.9"/>
    <!-- filter icon -->
    <path d="M1248.6 119.2 H1259.6 M1250.6 123.1 H1257.6 M1252.8 126.9 H1255.4"/>
    <!-- gear -->
    <path d="M1513.29 121.65 L1513.29 124.35 L1511.24 124.40 L1510.46 126.28 L1511.87 127.77 L1509.97 129.67 L1508.48 128.26 L1506.60 129.04 L1506.55 131.09 L1503.85 131.09 L1503.80 129.04 L1501.92 128.26 L1500.43 129.67 L1498.53 127.77 L1499.94 126.28 L1499.16 124.40 L1497.11 124.35 L1497.11 121.65 L1499.16 121.60 L1499.94 119.72 L1498.53 118.23 L1500.43 116.33 L1501.92 117.74 L1503.80 116.96 L1503.85 114.91 L1506.55 114.91 L1506.60 116.96 L1508.48 117.74 L1509.97 116.33 L1511.87 118.23 L1510.46 119.72 L1511.24 121.60 Z"/>
    <circle cx="1505.2" cy="123" r="2.7"/>
  </g>
  <g fill="none" stroke="#7a7a7a" stroke-width="1.350" stroke-linecap="round">
    <path d="M1503.4 89.3 H1517.2 M1510.3 82.4 V96.2"/>
    <circle cx="1630.2" cy="92" r="7.6"/>
    <path d="M1627.8 89.6 a2.5 2.5 0 1 1 3.6 2.2 q-1.1 0.6 -1.1 2" />
    <circle cx="1630.300" cy="96.100" r="0.500" fill="#7a7a7a"/>
  </g>
  <g fill="#3f3f3f">
    <circle cx="1597.6" cy="92" r="1.15"/><circle cx="1602.4" cy="92" r="1.15"/><circle cx="1607.2" cy="92" r="1.15"/>
  </g>
  <path d="M1170.300 120.900 H1179.900 L1175.100 127.800 Z M1422.600 120.700 H1432.300 L1427.450 127.700 Z" fill="#1b1b1b" stroke="#1b1b1b" stroke-width="1" stroke-linejoin="round"/>
  <!-- red error badge -->
  <circle cx="1262" cy="99" r="4.6" fill="#d93025"/>
  <path d="M1260.4 97.4 L1263.6 100.6 M1263.6 97.4 L1260.4 100.6" stroke="#fff" stroke-width="1" stroke-linecap="round"/>
  <!-- blue chat -->
  <circle cx="1461.2" cy="122.6" r="4.8" fill="#1a73e8"/>
  <path d="M1457 124 L1456.4 127.8 L1460 126.6 Z" fill="#1a73e8"/>
  <path d="M1459 123.4 q1.2 -1.6 2.2 0 t2.2 0" stroke="#fff" stroke-width="0.9" fill="none"/>
  <!-- source link icon -->
  <g fill="none" stroke="#1c55ad" stroke-width="0.950">
    <rect x="1614.600" y="154.300" width="9.200" height="10.400" rx="3.600" transform="translate(1619.200 159.500) skewX(-14) translate(-1619.200 -159.500)"/>
    <rect x="1618.800" y="155.600" width="8.600" height="10" rx="3.500" transform="translate(1623.100 160.600) skewX(-14) translate(-1623.100 -160.600)"/>
  </g>
</svg>
<div class="t dtt" style="left:1266px;top:86.800px;letter-spacing:-0.25px">Console</div>
<div class="t dtt" style="left:1145px;top:117.5px;letter-spacing:0.6px">top</div>
<div class="t dtt" style="left:1267px;top:117.5px;color:#474747">Filter</div>
<div class="t dtt" style="left:1369.5px;top:117.5px;letter-spacing:-0.13px">All levels</div>
<div class="t dtt" style="left:1470.5px;top:117px">9</div>
<!-- /DT-OVERLAY -->
</div>
</body>
</html>
